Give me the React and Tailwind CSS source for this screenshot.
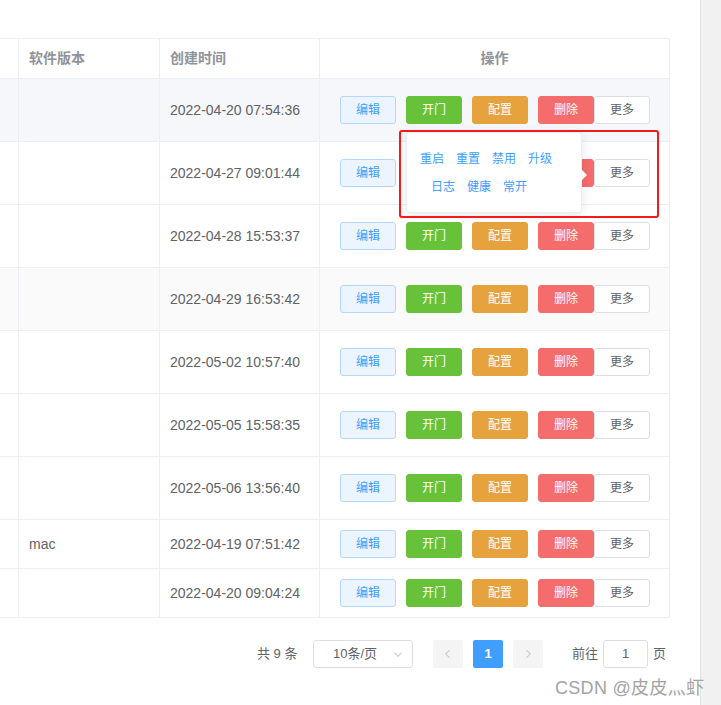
import React from "react";

const FONT = { fontFamily: '"Liberation Sans", "Noto Sans CJK SC", Arial, sans-serif' };

const rows = [
  { ver: "", time: "2022-04-20 07:54:36", h: "h-[63px]", bg: "bg-[#f5f7fa]" },
  { ver: "", time: "2022-04-27 09:01:44", h: "h-[63px]", bg: "bg-white" },
  { ver: "", time: "2022-04-28 15:53:37", h: "h-[63px]", bg: "bg-white" },
  { ver: "", time: "2022-04-29 16:53:42", h: "h-[63px]", bg: "bg-[#fafafa]" },
  { ver: "", time: "2022-05-02 10:57:40", h: "h-[63px]", bg: "bg-white" },
  { ver: "", time: "2022-05-05 15:58:35", h: "h-[63px]", bg: "bg-white" },
  { ver: "", time: "2022-05-06 13:56:40", h: "h-[63px]", bg: "bg-white" },
  { ver: "mac", time: "2022-04-19 07:51:42", h: "h-[49px]", bg: "bg-white" },
  { ver: "", time: "2022-04-20 09:04:24", h: "h-[49px]", bg: "bg-white" },
];

function Btn({ cls, children }) {
  return (
    <div className={`flex h-[28px] w-[56px] items-center justify-center rounded-[3px] border text-[12px] leading-none ${cls}`}>
      {children}
    </div>
  );
}

function Actions({ withPopover }) {
  return (
    <div className="relative flex items-center">
      <Btn cls="border-[#b3d8ff] bg-[#ecf5ff] text-[#409eff]">编辑</Btn>
      <div className="ml-[10px]">
        <Btn cls="border-[#67c23a] bg-[#67c23a] text-white">开门</Btn>
      </div>
      <div className="ml-[10px]">
        <Btn cls="border-[#e6a23c] bg-[#e6a23c] text-white">配置</Btn>
      </div>
      <div className="ml-[10px]">
        <Btn cls="border-[#f56c6c] bg-[#f56c6c] text-white">删除</Btn>
      </div>
      <Btn cls="border-[#dcdfe6] bg-white text-[#606266]">更多</Btn>
      {withPopover && (
        <>
          <div className="absolute left-[66px] top-[-27px] z-10 h-[81px] w-[176px] rounded-[4px] border border-[#ebeef5] bg-white shadow-[0_2px_12px_0_rgba(0,0,0,0.1)]">
            <div className="flex flex-col gap-[14px] pt-[19px] text-[12px] leading-[14px] text-[#409eff]">
              <div className="flex gap-[12px] pl-[13px]">
                <span>重启</span>
                <span>重置</span>
                <span>禁用</span>
                <span>升级</span>
              </div>
              <div className="flex gap-[12px] pl-[24px]">
                <span>日志</span>
                <span>健康</span>
                <span>常开</span>
              </div>
            </div>
            <div className="absolute right-[-6px] top-[36px] h-0 w-0 border-y-[6px] border-l-[6px] border-y-transparent border-l-white" />
          </div>
          <div className="pointer-events-none absolute left-[59px] top-[-29px] z-20 h-[88px] w-[260px] rounded-[3px] border-[2px] border-[#f41a1a]" />
        </>
      )}
    </div>
  );
}

function Chevron({ dir }) {
  const d = dir === "left" ? "M10 3 L5 8 L10 13" : dir === "right" ? "M6 3 L11 8 L6 13" : "M3 6 L8 11 L13 6";
  return (
    <svg width="12" height="12" viewBox="0 0 16 16" fill="none" stroke="currentColor" strokeWidth="1.4">
      <path d={d} />
    </svg>
  );
}

export default function App() {
  return (
    <div className="relative flex h-[705px] w-[721px] overflow-hidden bg-white" style={FONT}>
      <div className="w-[700px] pt-[38px]">
        <div className="w-[670px] border-t border-[#ebeef5]">
          {/* header */}
          <div className="flex h-[40px] text-[14px] font-bold text-[#909399]">
            <div className="w-[19px] border-b border-r border-[#ebeef5]" />
            <div className="flex w-[141px] items-center border-b border-r border-[#ebeef5] px-[10px]">软件版本</div>
            <div className="flex w-[160px] items-center border-b border-r border-[#ebeef5] px-[10px]">创建时间</div>
            <div className="flex w-[350px] items-center justify-center border-b border-r border-[#ebeef5]">操作</div>
          </div>
          {rows.map((r, i) => (
            <div key={i} className={`flex ${r.h} ${r.bg} text-[14px] text-[#606266]`}>
              <div className="w-[19px] border-b border-r border-[#ebeef5]" />
              <div className="flex w-[141px] items-center border-b border-r border-[#ebeef5] px-[10px]">{r.ver}</div>
              <div className="flex w-[160px] items-center border-b border-r border-[#ebeef5] px-[10px]">{r.time}</div>
              <div className="flex w-[350px] items-center justify-center border-b border-r border-[#ebeef5] pl-[1px]">
                <Actions withPopover={i === 1} />
              </div>
            </div>
          ))}
        </div>
        {/* pagination */}
        <div className="mt-[22px] flex h-[28px] items-center pl-[257px] text-[13px] text-[#606266]">
          <span className="w-[42px] whitespace-nowrap">共 9 条</span>
          <div className="ml-[14px] flex h-[28px] w-[100px] items-center rounded-[3px] border border-[#dcdfe6] pl-[19px] pr-[8px]">
            <span className="flex-1">10条/页</span>
            <span className="text-[#c0c4cc]"><Chevron dir="down" /></span>
          </div>
          <div className="ml-[20px] flex h-[28px] w-[30px] items-center justify-center rounded-[2px] bg-[#f4f4f5] text-[#c0c4cc]">
            <Chevron dir="left" />
          </div>
          <div className="ml-[10px] flex h-[28px] w-[30px] items-center justify-center rounded-[2px] bg-[#409eff] font-bold text-white">1</div>
          <div className="ml-[10px] flex h-[28px] w-[30px] items-center justify-center rounded-[2px] bg-[#f4f4f5] text-[#c0c4cc]">
            <Chevron dir="right" />
          </div>
          <span className="ml-[29px]">前往</span>
          <div className="ml-[5px] flex h-[28px] w-[45px] items-center justify-center rounded-[3px] border border-[#dcdfe6]">1</div>
          <span className="ml-[5px]">页</span>
        </div>
      </div>
      <div className="w-[21px] border-l border-[#e3e3e3] bg-[#f1f1f1]" />
      <div className="absolute left-[555px] top-[676px] whitespace-nowrap text-[18px] leading-[24px] tracking-[0.3px] text-[#a3a3a3]">
        CSDN @皮皮灬虾
      </div>
    </div>
  );
}
